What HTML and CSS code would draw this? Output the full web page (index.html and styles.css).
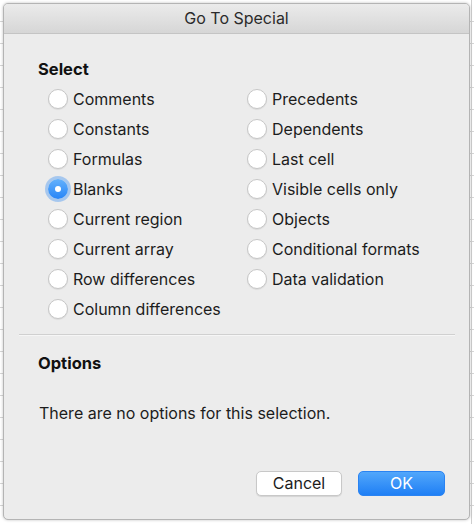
FILE: index.html
```html
<!DOCTYPE html>
<html lang="en">
<head>
<meta charset="utf-8">
<title>Go To Special</title>
<link rel="stylesheet" href="styles.css">
</head>
<body>
<div class="dialog">
  <div class="titlebar">Go To Special</div>
  <div class="select-section">
    <h2 class="heading">Select</h2>
    <div class="grid">
      <div class="opt"><span class="radio"></span><span>Comments</span></div>
      <div class="opt"><span class="radio"></span><span>Precedents</span></div>
      <div class="opt"><span class="radio"></span><span>Constants</span></div>
      <div class="opt"><span class="radio"></span><span>Dependents</span></div>
      <div class="opt"><span class="radio"></span><span>Formulas</span></div>
      <div class="opt"><span class="radio"></span><span>Last cell</span></div>
      <div class="opt"><span class="radio checked"></span><span>Blanks</span></div>
      <div class="opt"><span class="radio"></span><span>Visible cells only</span></div>
      <div class="opt"><span class="radio"></span><span>Current region</span></div>
      <div class="opt"><span class="radio"></span><span>Objects</span></div>
      <div class="opt"><span class="radio"></span><span>Current array</span></div>
      <div class="opt"><span class="radio"></span><span>Conditional formats</span></div>
      <div class="opt"><span class="radio"></span><span>Row differences</span></div>
      <div class="opt"><span class="radio"></span><span>Data validation</span></div>
      <div class="opt"><span class="radio"></span><span>Column differences</span></div>
    </div>
  </div>
  <div class="sep"></div>
  <div class="options-section">
    <h2 class="heading">Options</h2>
    <p class="note">There are no options for this selection.</p>
  </div>
  <div class="footer">
    <button class="btn cancel">Cancel</button>
    <button class="btn ok">OK</button>
  </div>
</div>
</body>
</html>
```
FILE: styles.css
```css
html, body {
  margin: 0;
  padding: 0;
}
body {
  width: 474px;
  height: 524px;
  overflow: hidden;
  background-color: #ffffff;
  background-image:
    linear-gradient(to right, transparent 471px, #cfcfcf 471px, #cfcfcf 472px, transparent 472px),
    repeating-linear-gradient(to bottom, transparent 0, transparent 21px, #d6d6d6 21px, #d6d6d6 22px);
  font-family: "Inter", "Liberation Sans", sans-serif;
  color: #1c1c1c;
  font-size: 16px;
}
.dialog {
  box-sizing: border-box;
  width: 467px;
  height: 517px;
  margin: 3px 4px 4px 3px;
  background: #ececec;
  border: 1px solid #b4b4b4;
  border-radius: 5px;
  box-shadow: 0 0 3px rgba(0, 0, 0, 0.25);
  display: flex;
  flex-direction: column;
  overflow: hidden;
}
.titlebar {
  height: 29px;
  line-height: 29px;
  text-align: center;
  border-bottom: 1px solid #c4c4c4;
  background: linear-gradient(#ebebeb, #d6d6d6);
  color: #2b2b2b;
  font-size: 16px;
}
.select-section {
  padding: 25px 34px 0 34px;
}
.heading {
  margin: 0;
  font-size: 16.5px;
  line-height: 20px;
  font-weight: 700;
  color: #111;
}
.grid {
  margin: 5px 0 0 10px;
  display: grid;
  grid-template-columns: 199px 200px;
  grid-auto-rows: 30px;
}
.opt {
  display: flex;
  align-items: center;
  gap: 5px;
  white-space: nowrap;
  line-height: 20px;
}
.radio {
  box-sizing: border-box;
  flex: none;
  width: 20px;
  height: 20px;
  border-radius: 50%;
  background: #ffffff;
  border: 1px solid #c6c6c6;
  box-shadow: 0 1px 1px rgba(0, 0, 0, 0.08);
  position: relative;
}
.radio.checked {
  border: none;
  background: linear-gradient(#63b1fc, #2885f7);
  box-shadow: 0 0 0 3px rgba(120, 175, 240, 0.6);
}
.radio.checked::after {
  content: "";
  position: absolute;
  left: 7px;
  top: 7px;
  width: 6px;
  height: 6px;
  border-radius: 50%;
  background: #fff;
}
.sep {
  margin: 10px 14px 0 15px;
  border-top: 1px solid #d0d0d0;
  border-bottom: 1px solid #f6f6f6;
}
.options-section {
  padding: 17px 34px 0 34px;
}
.note {
  margin: 30px 0 0 1px;
  line-height: 20px;
}
.footer {
  margin-top: auto;
  padding: 0 24px 23px 0;
  display: flex;
  justify-content: flex-end;
  gap: 16px;
}
.btn {
  box-sizing: border-box;
  height: 25px;
  border-radius: 5px;
  font-family: inherit;
  font-size: 16px;
  padding: 0;
  line-height: 23px;
}
.cancel {
  width: 86px;
  background: #ffffff;
  color: #1c1c1c;
  border: 1px solid #c8c8c8;
  box-shadow: 0 1px 1px rgba(0, 0, 0, 0.1);
}
.ok {
  width: 87px;
  color: #ffffff;
  border: 1px solid #2a83f2;
  background: linear-gradient(#52a7fb, #1f7ff5);
}
```
